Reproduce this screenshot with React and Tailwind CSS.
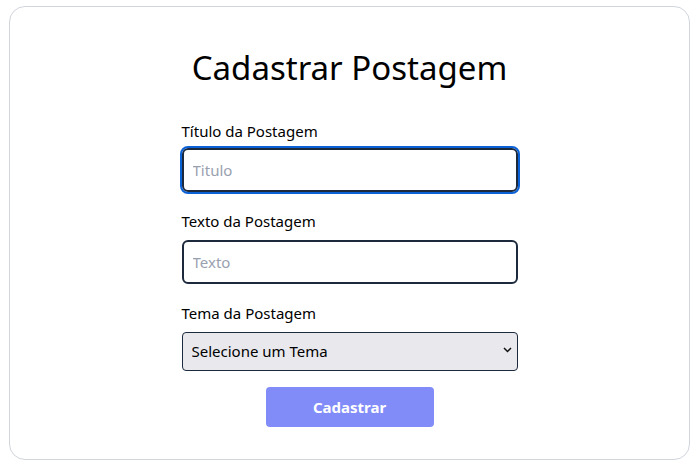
import { useState } from "react";

function App() {
    const [titulo, setTitulo] = useState("");
    const [texto, setTexto] = useState("");
    const [tema, setTema] = useState("");

    return (
        <div className="w-[698px] h-[465px] bg-white p-[6px_8px_5px_9px] font-['Noto_Sans',sans-serif] text-black">
            <div className="h-full border border-gray-300 rounded-2xl flex flex-col items-center">

                <h1 className="text-[33px] leading-[44px] mt-[39px] mb-[29px]">
                    Cadastrar Postagem
                </h1>

                <form className="w-[336px] flex flex-col">
                    <label className="text-[15px] leading-6 mb-[5px]">
                        Título da Postagem
                    </label>
                    <input
                        type="text"
                        placeholder="Titulo"
                        value={titulo}
                        onChange={(e) => setTitulo(e.target.value)}
                        className="h-[44px] border-2 border-slate-800 rounded-md px-[9px] text-[15px] placeholder:text-gray-400 outline-2 outline-[#0b62d6] mb-[17px]"
                    />

                    <label className="text-[15px] leading-6 mb-[7px]">
                        Texto da Postagem
                    </label>
                    <input
                        type="text"
                        placeholder="Texto"
                        value={texto}
                        onChange={(e) => setTexto(e.target.value)}
                        className="h-[44px] border-2 border-slate-800 rounded-md px-[9px] text-[15px] placeholder:text-gray-400 mb-[17px]"
                    />

                    <label className="text-[15px] leading-6 mb-[7px]">
                        Tema da Postagem
                    </label>
                    <div className="relative mb-[16px]">
                        <select
                            value={tema}
                            onChange={(e) => setTema(e.target.value)}
                            className="appearance-none w-full h-[39px] border border-slate-800 rounded-[4px] bg-[#e9e9ed] pl-[9px] text-[15px]"
                        >
                            <option value="">Selecione um Tema</option>
                        </select>
                        <svg className="absolute right-[6px] top-[15px] pointer-events-none" width="9" height="6" viewBox="0 0 9 6" fill="none">
                            <path d="M1 1l3.5 3.5L8 1" stroke="#111" strokeWidth="1.5" />
                        </svg>
                    </div>

                    <button
                        type="button"
                        className="self-center w-[168px] h-[40px] rounded-[4px] bg-[#818cf8] text-white font-bold text-[15px]"
                    >
                        Cadastrar
                    </button>
                </form>
            </div>
        </div>
    );
}

export default App;
